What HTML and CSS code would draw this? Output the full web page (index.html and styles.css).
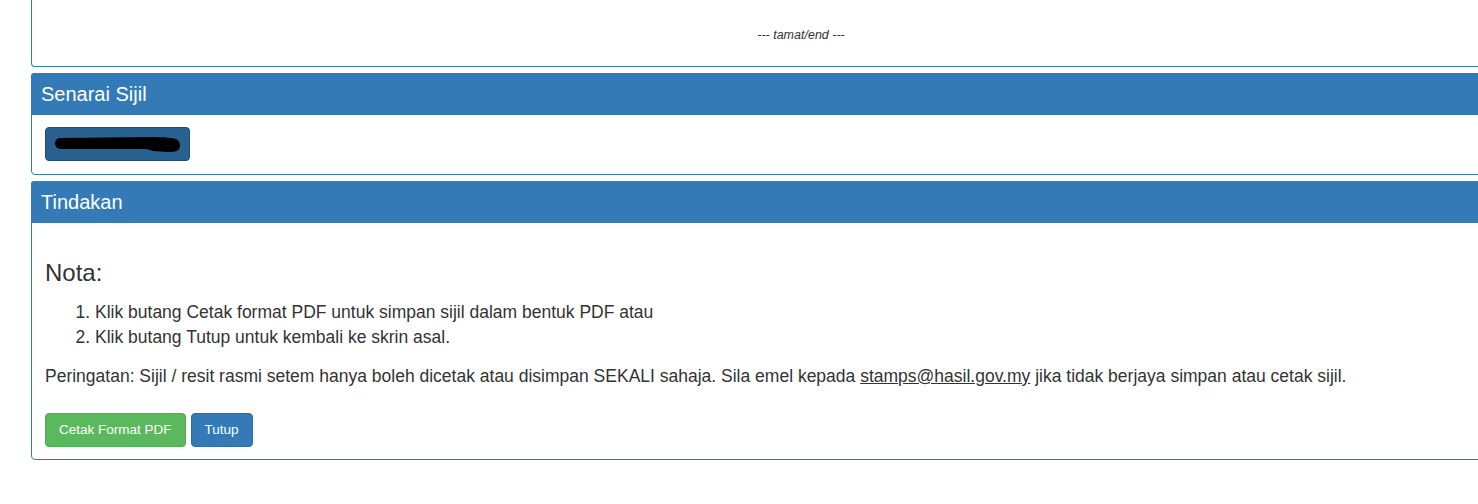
FILE: index.html
```html
<!DOCTYPE html>
<html lang="ms">
<head>
    <meta charset="UTF-8">
    <meta name="viewport" content="width=device-width, initial-scale=1.0">
    <title>Sijil Setem</title>
    <link rel="stylesheet" href="styles.css">
</head>
<body>
    <div class="container">
        <!-- Hujung paparan sijil -->
        <div class="panel panel-cont">
            <div class="panel-body tamat">
                <em>--- tamat/end ---</em>
            </div>
        </div>

        <div class="panel">
            <div class="panel-heading">Senarai Sijil</div>
            <div class="panel-body sijil-body">
                <button class="btn btn-sijil">
                    <svg class="redact" width="126" height="17" viewBox="0 0 126 17">
                        <path d="M6 2 L95 1 C110 1 118 2 121 3 C125 5 126 10 124 13 C122 16 118 16 112 16 L98 15 C95 14 93 13 90 13 L6 13 C2 13 0 10 0 7.5 C0 4 2 2 6 2 Z" fill="#000"/>
                    </svg>
                </button>
            </div>
        </div>

        <div class="panel">
            <div class="panel-heading">Tindakan</div>
            <div class="panel-body tindakan-body">
                <h3 class="nota">Nota:</h3>
                <ol class="langkah">
                    <li>Klik butang Cetak format PDF untuk simpan sijil dalam bentuk PDF atau</li>
                    <li>Klik butang Tutup untuk kembali ke skrin asal.</li>
                </ol>
                <p class="amaran">Peringatan: Sijil / resit rasmi setem hanya boleh dicetak atau disimpan SEKALI sahaja. Sila emel kepada <a href="#">stamps@hasil.gov.my</a> jika tidak berjaya simpan atau cetak sijil.</p>
                <div class="butang">
                    <button class="btn btn-success">Cetak Format PDF</button>
                    <button class="btn btn-primary">Tutup</button>
                </div>
            </div>
        </div>
    </div>
</body>
</html>
```

FILE: styles.css
```css
html, body {
    overflow: hidden;
}
body {
    margin: 0;
    font-family: "Liberation Sans", Arial, sans-serif;
    font-size: 17.5px;
    color: #333;
    background: #fff;
}
.container {
    width: 1540px;
    margin-left: 31px;
}
.panel {
    border: 1px solid #337ab7;
    border-radius: 4px;
    margin-bottom: 6px;
    background: #fff;
}
.panel-cont {
    border-top: 0;
    border-top-left-radius: 0;
    border-top-right-radius: 0;
}
.panel-heading {
    background: #337ab7;
    color: #fff;
    font-size: 20px;
    line-height: 22px;
    padding: 10px 10px;
    margin: -1px -1px 0;
    border-radius: 3px 3px 0 0;
}
.panel-body {
    padding: 13px;
}
.tamat {
    height: 39px;
    padding: 27px 0 0;
    text-align: center;
    font-size: 12.5px;
    line-height: 16px;
}
.sijil-body {
    padding-top: 12px;
    padding-bottom: 13px;
    line-height: 0;
}
.tindakan-body {
    padding-bottom: 12px;
}
.btn {
    font-family: "Liberation Sans", Arial, sans-serif;
    font-size: 13.5px;
    line-height: 18px;
    padding: 7px 13px;
    border: 1px solid transparent;
    border-radius: 4px;
    color: #fff;
    cursor: pointer;
}
.btn-sijil {
    width: 145px;
    height: 34px;
    padding: 0 0 0 9px;
    background: #286090;
    border-color: #204d74;
    display: inline-flex;
    align-items: center;
}
.redact {
    display: block;
}
.btn-success {
    background: #5cb85c;
    border-color: #4cae4c;
}
.btn-primary {
    background: #337ab7;
    border-color: #2e6da4;
}
.nota {
    font-size: 24px;
    font-weight: normal;
    line-height: 28px;
    margin: 23px 0 13px;
}
.langkah {
    margin: 0 0 14px;
    padding-left: 50px;
    line-height: 25px;
}
.amaran {
    margin: 0 0 24px;
    line-height: 25px;
}
.amaran a {
    color: #333;
    text-decoration: underline;
}
.butang {
    display: flex;
    gap: 5px;
}
```
